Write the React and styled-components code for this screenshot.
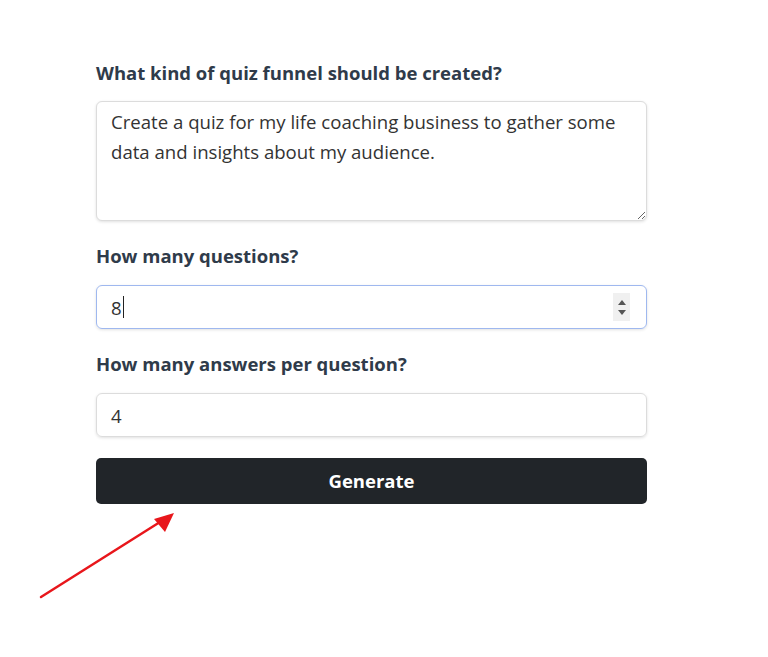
import React from "react";
import styled, { createGlobalStyle } from "styled-components";

const font = `"Open Sans", "Noto Sans", sans-serif`;

const GlobalStyle = createGlobalStyle`
  body {
    margin: 0;
    background: #ffffff;
    font-family: ${font};
  }
`;

const Page = styled.div`
  position: relative;
  width: 768px;
  height: 657px;
  padding: 61px 0 0 96px;
  box-sizing: border-box;
`;

const Form = styled.form`
  width: 551px;
  display: flex;
  flex-direction: column;
`;

const Label = styled.label`
  font-size: 18.5px;
  line-height: 24px;
  font-weight: 700;
  color: #2f3b4a;
  margin-top: ${(p) => (p.$first ? "0" : "23px")};
  margin-bottom: ${(p) => (p.$first ? "16px" : "17px")};
`;

const TextArea = styled.textarea`
  display: block;
  height: 120px;
  box-sizing: border-box;
  padding: 5px 14px;
  border: 1px solid #dcdcdc;
  border-radius: 6px;
  box-shadow: 0 1px 3px rgba(0, 0, 0, 0.12);
  font-family: ${font};
  font-size: 18.6px;
  line-height: 30px;
  color: #333;
  resize: vertical;
  outline: none;
`;

const Field = styled.div`
  position: relative;
  height: 44px;
  box-sizing: border-box;
  padding: 0 14px;
  display: flex;
  align-items: center;
  border: 1px solid ${(p) => (p.$focused ? "#9fb8ef" : "#dcdcdc")};
  border-radius: 6px;
  box-shadow: 0 1px 3px rgba(0, 0, 0, 0.12);
  font-size: 18.6px;
  color: #333;
`;

const Caret = styled.span`
  display: inline-block;
  width: 1px;
  height: 22px;
  background: #222;
  margin-left: 1px;
`;

const Spinner = styled.span`
  position: absolute;
  right: 16px;
  top: 50%;
  transform: translateY(-50%);
  width: 17px;
  height: 28px;
  background: #f0f0f0;
  display: flex;
  flex-direction: column;
  align-items: center;
  justify-content: center;
  gap: 5px;
`;

const Tri = styled.span`
  width: 0;
  height: 0;
  border-left: 4px solid transparent;
  border-right: 4px solid transparent;
  ${(p) =>
    p.$down
      ? "border-top: 5px solid #555;"
      : "border-bottom: 5px solid #555;"}
`;

const Button = styled.button`
  margin-top: 21px;
  height: 46px;
  padding-bottom: 2px;
  border: none;
  border-radius: 5px;
  background: #212529;
  color: #fff;
  font-family: ${font};
  font-size: 18.5px;
  font-weight: 700;
  cursor: pointer;
`;

const Arrow = styled.svg`
  position: absolute;
  left: 0;
  top: 0;
  pointer-events: none;
`;

export default function App() {
  return (
    <>
      <GlobalStyle />
      <Page>
        <Form onSubmit={(e) => e.preventDefault()}>
          <Label $first>What kind of quiz funnel should be created?</Label>
          <TextArea defaultValue="Create a quiz for my life coaching business to gather some data and insights about my audience." />
          <Label>How many questions?</Label>
          <Field $focused>
            8<Caret />
            <Spinner>
              <Tri />
              <Tri $down />
            </Spinner>
          </Field>
          <Label>How many answers per question?</Label>
          <Field>4</Field>
          <Button type="submit">Generate</Button>
        </Form>
        <Arrow width="768" height="657" viewBox="0 0 768 657">
          <line x1="41" y1="597" x2="160" y2="522" stroke="#e8161b" strokeWidth="2.5" strokeLinecap="round" />
          <polygon points="174,513 154,519 165,532" fill="#e8161b" />
        </Arrow>
      </Page>
    </>
  );
}
